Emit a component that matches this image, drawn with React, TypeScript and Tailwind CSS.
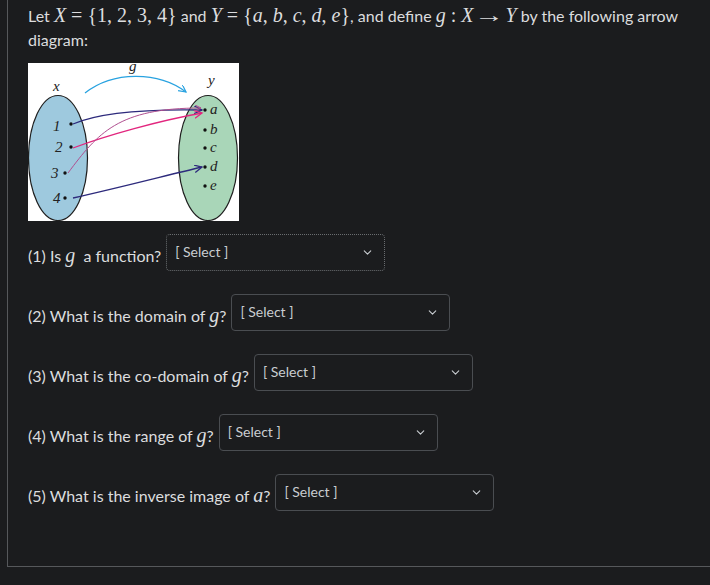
import { ChevronDown } from "lucide-react";

const mathFont = { fontFamily: '"Liberation Serif", "DejaVu Serif", serif' };

function M({ children }: { children: React.ReactNode }) {
  return (
    <span className="text-[20px] leading-none" style={mathFont}>
      {children}
    </span>
  );
}

function I({ children }: { children: React.ReactNode }) {
  return <i>{children}</i>;
}

// relation symbol with KaTeX-like spacing
function Rel({ children }: { children: React.ReactNode }) {
  return <span className="mx-[5px]">{children}</span>;
}

function Arrow() {
  return (
    <span className="mx-[4px] inline-block origin-center scale-x-[1.5] px-[2px]">→</span>
  );
}

function SelectBox({ focused = false }: { focused?: boolean }) {
  return (
    <div
      className={
        "ml-[5px] flex h-[37px] w-[219px] shrink-0 items-center justify-between rounded-[4px] border pl-[8px] pr-[10px] text-[14px] text-[#c9cdd1] " +
        (focused ? "border-dotted border-[#6a6d70]" : "border-[#4a4d51]")
      }
    >
      <span className="-mt-[2px]">[ Select ]</span>
      <ChevronDown size={13} strokeWidth={2} className="text-[#c9cdd1]" />
    </div>
  );
}

function Question({ label, focused = false }: { label: React.ReactNode; focused?: boolean }) {
  return (
    <div className="flex items-end">
      <div className="whitespace-nowrap pb-[3px] leading-6">{label}</div>
      <SelectBox focused={focused} />
    </div>
  );
}

function Diagram() {
  const navy = "#2d2a7c";
  const pink = "#e2267e";
  const mauve = "#b04f90";
  const sky = "#28a2e0";
  return (
    <svg width="211" height="158" viewBox="0 0 211 158" className="block bg-white">
      <defs>
        {[
          ["n", navy],
          ["p", pink],
          ["m", mauve],
          ["s", sky],
        ].map(([id, c]) => (
          <marker key={id} id={"ah-" + id} markerWidth="8" markerHeight="8" refX="6" refY="3" orient="auto">
            <path d="M0,0 L6,3 L0,6" fill="none" stroke={c} strokeWidth="1" />
          </marker>
        ))}
      </defs>
      <ellipse cx="30" cy="95" rx="29.5" ry="62.5" fill="#9ec9de" stroke="#1e1e1e" strokeWidth="1.2" />
      <ellipse cx="180" cy="95" rx="29.5" ry="62.5" fill="#a9d6b8" stroke="#1e1e1e" strokeWidth="1.2" />
      <g style={mathFont} fontStyle="italic" fontSize="15" fill="#222">
        <text x="25" y="28">x</text>
        <text x="180" y="22">y</text>
        <text x="101" y="8">g</text>
        <text x="25" y="68">1</text>
        <text x="27" y="89">2</text>
        <text x="23" y="115">3</text>
        <text x="25" y="140">4</text>
        <text x="182" y="51">a</text>
        <text x="182" y="71">b</text>
        <text x="182" y="89">c</text>
        <text x="182" y="108">d</text>
        <text x="182" y="127">e</text>
      </g>
      <g fill="#111">
        <circle cx="43" cy="61" r="1.7" />
        <circle cx="43" cy="84" r="1.7" />
        <circle cx="37" cy="110" r="1.7" />
        <circle cx="37" cy="135" r="1.7" />
        <circle cx="177" cy="47" r="1.7" />
        <circle cx="177" cy="67" r="1.7" />
        <circle cx="177" cy="85" r="1.7" />
        <circle cx="177" cy="104" r="1.7" />
        <circle cx="177" cy="123" r="1.7" />
      </g>
      <path d="M57 30 C 85 8, 130 8, 158 29" fill="none" stroke={sky} strokeWidth="1.2" markerEnd="url(#ah-s)" />
      <path d="M45 61 C 70 50, 120 46, 174 47" fill="none" stroke={navy} strokeWidth="1.3" markerEnd="url(#ah-n)" />
      <path d="M45 85 C 80 72, 130 58, 174 50" fill="none" stroke={pink} strokeWidth="1.3" markerEnd="url(#ah-p)" />
      <path d="M40 110 C 70 70, 90 45, 173 45" fill="none" stroke={mauve} strokeWidth="1" markerEnd="url(#ah-m)" />
      <path d="M45 135 C 90 125, 140 112, 174 104" fill="none" stroke={navy} strokeWidth="1.3" markerEnd="url(#ah-n)" />
    </svg>
  );
}

export default function App() {
  return (
    <div
      className="min-h-[585px] w-[710px] overflow-hidden bg-[#1b1c1e] text-[16px] text-[#dcdddf]"
      style={{ fontFamily: 'Lato, "Open Sans", sans-serif' }}
    >
      <div className="ml-[7px] w-[730px] border-b border-l border-[#56585b] pb-[55px] pl-[20px] pt-[4px]">
        <p className="w-[668px] leading-6">
          Let{" "}
          <M>
            <I>X</I>
            <Rel>=</Rel>
            {"{"}1, 2, 3, 4{"}"}
          </M>{" "}
          and{" "}
          <M>
            <I>Y</I>
            <Rel>=</Rel>
            {"{"}
            <I>a</I>, <I>b</I>, <I>c</I>, <I>d</I>, <I>e</I>
            {"}"}
          </M>
          , and define{" "}
          <M>
            <I>g</I>
            <Rel>:</Rel>
            <I>X</I>
            <Arrow />
            <I>Y</I>
          </M>{" "}
          by the following arrow diagram:
        </p>
        <div className="mt-[11px]">
          <Diagram />
        </div>
        <div className="mt-[13px] flex flex-col gap-[23px]">
          <Question
            focused
            label={
              <>
                (1) Is{" "}
                <M>
                  <I>g</I>
                </M>
                &nbsp; a function?
              </>
            }
          />
          <Question
            label={
              <>
                (2) What is the domain of{" "}
                <M>
                  <I>g</I>
                </M>
                ?
              </>
            }
          />
          <Question
            label={
              <>
                (3) What is the co-domain of{" "}
                <M>
                  <I>g</I>
                </M>
                ?
              </>
            }
          />
          <Question
            label={
              <>
                (4) What is the range of{" "}
                <M>
                  <I>g</I>
                </M>
                ?
              </>
            }
          />
          <Question
            label={
              <>
                (5) What is the inverse image of{" "}
                <M>
                  <I>a</I>
                </M>
                ?
              </>
            }
          />
        </div>
      </div>
    </div>
  );
}
